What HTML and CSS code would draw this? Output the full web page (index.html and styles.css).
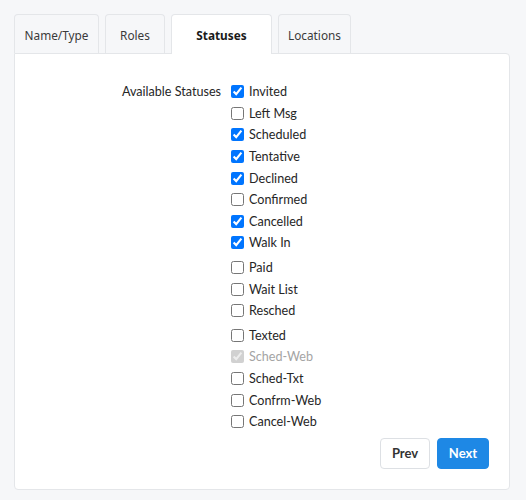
FILE: index.html
```html
<!DOCTYPE html>
<html>
<head>
<meta charset="utf-8">
<link rel="stylesheet" href="styles.css">
</head>
<body>
<div class="tabs">
  <div class="tab tab-name">Name/Type</div>
  <div class="tab tab-roles">Roles</div>
  <div class="tab tab-statuses active">Statuses</div>
  <div class="tab tab-locations">Locations</div>
</div>
<div class="panel">
  <div class="form-row">
    <div class="field-label">Available Statuses</div>
    <div class="checks">
      <div class="group">
        <label class="check"><input type="checkbox" checked><span>Invited</span></label>
        <label class="check"><input type="checkbox"><span>Left Msg</span></label>
        <label class="check"><input type="checkbox" checked><span>Scheduled</span></label>
        <label class="check"><input type="checkbox" checked><span>Tentative</span></label>
        <label class="check"><input type="checkbox" checked><span>Declined</span></label>
        <label class="check"><input type="checkbox"><span>Confirmed</span></label>
        <label class="check"><input type="checkbox" checked><span>Cancelled</span></label>
        <label class="check"><input type="checkbox" checked><span>Walk In</span></label>
      </div>
      <div class="group">
        <label class="check"><input type="checkbox"><span>Paid</span></label>
        <label class="check"><input type="checkbox"><span>Wait List</span></label>
        <label class="check"><input type="checkbox"><span>Resched</span></label>
      </div>
      <div class="group">
        <label class="check"><input type="checkbox"><span>Texted</span></label>
        <label class="check disabled"><input type="checkbox" checked disabled><span>Sched-Web</span></label>
        <label class="check"><input type="checkbox"><span>Sched-Txt</span></label>
        <label class="check"><input type="checkbox"><span>Confrm-Web</span></label>
        <label class="check"><input type="checkbox"><span>Cancel-Web</span></label>
      </div>
    </div>
  </div>
  <div class="actions">
    <button class="btn btn-prev">Prev</button>
    <button class="btn btn-next">Next</button>
  </div>
</div>
</body>
</html>
```
FILE: styles.css
```css
html, body {
  margin: 0;
  background: #f6f7f9;
}
body {
  padding: 14px 16px 10px 14px;
  font-family: Lato, "Liberation Sans", sans-serif;
  color: #222;
}
.tabs {
  display: flex;
  gap: 6px;
  height: 39px;
}
.tab {
  box-sizing: border-box;
  height: 39px;
  border: 1px solid #e4e6e9;
  border-bottom: none;
  border-radius: 4px 4px 0 0;
  background: #f6f7f9;
  display: flex;
  align-items: center;
  justify-content: center;
  font-family: "Noto Sans", "Open Sans", sans-serif;
  font-size: 11.8px;
  color: #3a3a3a;
  padding-top: 1px;
}
.tab-name { width: 85px; }
.tab-roles { width: 60px; }
.tab-statuses { width: 101px; }
.tab-locations { width: 73px; }
.tab.active {
  background: #fff;
  font-weight: 700;
  color: #1a1a1a;
  position: relative;
  z-index: 1;
  height: 40px;
  margin-bottom: -1px;
}
.panel {
  box-sizing: border-box;
  height: 437px;
  background: #fff;
  border: 1px solid #e4e6e9;
  border-radius: 0 4px 4px 4px;
  padding: 27px 20px 20px 0;
}
.form-row {
  display: flex;
}
.field-label {
  width: 206px;
  text-align: right;
  font-size: 12.6px;
  line-height: 21.6px;
  color: #262626;
  padding-right: 10px;
}
.group + .group {
  margin-top: 3px;
}
.check {
  display: flex;
  align-items: center;
  height: 21.6px;
  font-size: 12.6px;
  color: #262626;
}
.check input {
  width: 13px;
  height: 13px;
  margin: 0 5px 0 0;
}
.check.disabled span {
  color: #a4a4a4;
}
.actions {
  display: flex;
  justify-content: flex-end;
  gap: 7px;
  margin-top: 5px;
}
.btn {
  height: 31px;
  border-radius: 4px;
  font-family: Lato, "Liberation Sans", sans-serif;
  font-weight: 700;
  font-size: 13px;
  cursor: pointer;
}
.btn-prev {
  width: 50px;
  background: #fff;
  border: 1px solid #dde0e4;
  color: #333;
}
.btn-next {
  width: 52px;
  background: #1e88e5;
  border: 1px solid #1e88e5;
  color: #fff;
}
```
